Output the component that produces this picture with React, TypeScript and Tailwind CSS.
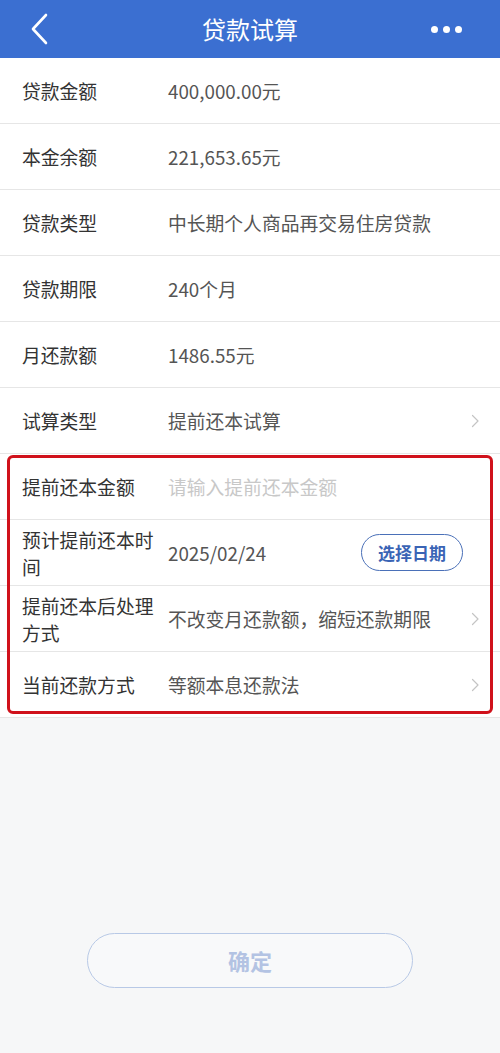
import React from "react";

const font = { fontFamily: '"Noto Sans CJK SC", "Noto Sans", sans-serif' };

type Row = { label: string; value: string; placeholder?: boolean; arrow?: boolean; button?: boolean };

const rows: Row[] = [
  { label: "贷款金额", value: "400,000.00元" },
  { label: "本金余额", value: "221,653.65元" },
  { label: "贷款类型", value: "中长期个人商品再交易住房贷款" },
  { label: "贷款期限", value: "240个月" },
  { label: "月还款额", value: "1486.55元" },
  { label: "试算类型", value: "提前还本试算", arrow: true },
  { label: "提前还本金额", value: "请输入提前还本金额", placeholder: true },
  { label: "预计提前还本时间", value: "2025/02/24", button: true },
  { label: "提前还本后处理方式", value: "不改变月还款额，缩短还款期限", arrow: true },
  { label: "当前还款方式", value: "等额本息还款法", arrow: true },
];

function Chevron() {
  return (
    <svg width="9" height="14" viewBox="0 0 9 14" fill="none" className="shrink-0">
      <path d="M1.5 1.5 L7 7 L1.5 12.5" stroke="#c4c4c4" strokeWidth="1.2" strokeLinecap="round" strokeLinejoin="round" />
    </svg>
  );
}

function ListRow({ row }: { row: Row }) {
  return (
    <div className="flex h-[66px] items-center border-b border-[#e6e6e6] pl-[22px] pr-[20px]">
      <div className="w-[146px] shrink-0 pr-[8px] text-[18.8px] leading-[27px] text-[#333]">{row.label}</div>
      <div
        className={`flex-1 whitespace-nowrap text-[18.8px] leading-[27px] ${row.placeholder ? "text-[#c8c8c8]" : "text-[#555]"}`}
      >
        {row.value}
      </div>
      {row.arrow && <Chevron />}
      {row.button && (
        <div className="mr-[17px] flex h-[37px] w-[102px] items-center justify-center rounded-full border-[1.5px] border-[#4a70b8] text-[17px] font-bold text-[#3a64b5]">
          选择日期
        </div>
      )}
    </div>
  );
}

export default function App() {
  return (
    <div className="flex min-h-[1053px] w-[500px] flex-col bg-[#f6f7f8]" style={font}>
      <header className="flex h-[58px] items-center bg-[#3b6fd1]">
        <div className="flex w-[80px] pl-[28px]">
          <svg width="22" height="34" viewBox="0 0 22 34" fill="none">
            <path d="M18 3 L5 17 L18 31" stroke="#fff" strokeWidth="2.6" strokeLinecap="round" strokeLinejoin="round" />
          </svg>
        </div>
        <div className="flex-1 text-center text-[24px] text-white">贷款试算</div>
        <div className="flex w-[80px] justify-end gap-[5px] pr-[38px]">
          <span className="h-[7px] w-[7px] rounded-full bg-white" />
          <span className="h-[7px] w-[7px] rounded-full bg-white" />
          <span className="h-[7px] w-[7px] rounded-full bg-white" />
        </div>
      </header>

      <div className="relative bg-white">
        {rows.map((r) => (
          <ListRow key={r.label} row={r} />
        ))}
        <div className="pointer-events-none absolute left-[7px] right-[7px] top-[397px] h-[259px] rounded-[6px] border-[3px] border-[#d0111b]" />
      </div>

      <div className="flex flex-1 justify-center pt-[215px]">
        <div className="flex h-[55px] w-[326px] items-center justify-center rounded-full border border-[#b8c9e6] bg-[#f8f9fa] text-[22px] font-bold text-[#b3c3e3]">
          确定
        </div>
      </div>
    </div>
  );
}
